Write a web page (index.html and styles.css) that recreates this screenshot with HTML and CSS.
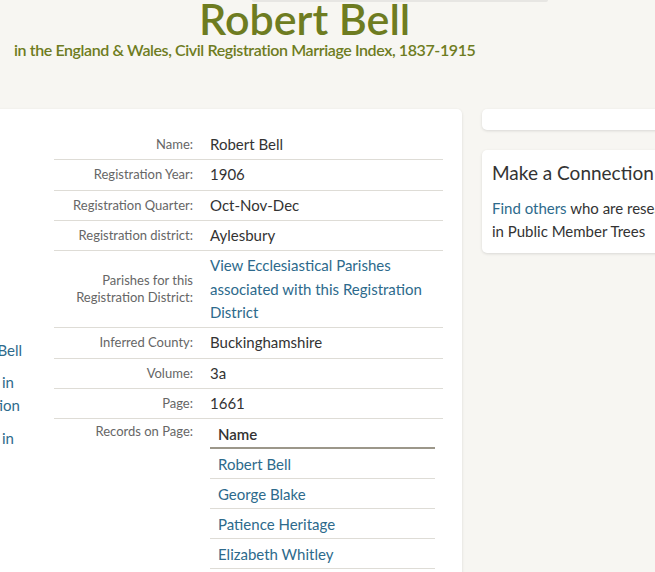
FILE: index.html
```html
<!DOCTYPE html>
<html>
<head>
<meta charset="utf-8">
<title>Robert Bell - England &amp; Wales, Civil Registration Marriage Index</title>
<link rel="stylesheet" href="styles.css">
</head>
<body>
<div class="page">
	<div class="topbar"></div>

	<div class="heading">
		<h1>Robert Bell</h1>
		<h2>in the England &amp; Wales, Civil Registration Marriage Index, 1837-1915</h2>
	</div>

	<div class="columns">
		<div class="card main">
			<div class="side">
				<p class="side-link end1"><a href="#">Search for Robert Bell</a></p>
				<p class="side-link end2"><a href="#">Marriages in</a></p>
				<p class="side-link end3"><a href="#">Civil Registration</a></p>
				<p class="side-link end2 next"><a href="#">Records in</a></p>
			</div>

			<table class="record">
				<tr><th>Name:</th><td>Robert Bell</td></tr>
				<tr><th>Registration Year:</th><td>1906</td></tr>
				<tr><th>Registration Quarter:</th><td>Oct-Nov-Dec</td></tr>
				<tr><th>Registration district:</th><td>Aylesbury</td></tr>
				<tr>
					<th>Parishes for this<br>Registration District:</th>
					<td><a href="#">View Ecclesiastical Parishes associated with this Registration District</a></td>
				</tr>
				<tr><th>Inferred County:</th><td>Buckinghamshire</td></tr>
				<tr><th>Volume:</th><td>3a</td></tr>
				<tr><th>Page:</th><td>1661</td></tr>
				<tr class="top">
					<th>Records on Page:</th>
					<td>
						<table class="names">
							<tr><th>Name</th></tr>
							<tr><td><a href="#">Robert Bell</a></td></tr>
							<tr><td><a href="#">George Blake</a></td></tr>
							<tr><td><a href="#">Patience Heritage</a></td></tr>
							<tr><td><a href="#">Elizabeth Whitley</a></td></tr>
						</table>
					</td>
				</tr>
			</table>
		</div>

		<div class="aside">
			<div class="card small"></div>
			<div class="card connect">
				<h3>Make a Connection</h3>
				<p><a href="#">Find others</a> who are researching this person in Public Member Trees</p>
			</div>
		</div>
	</div>
</div>
</body>
</html>
```

FILE: styles.css
```css
html, body
{
margin: 0;
padding: 0;
overflow: hidden;
}

body
{
background-color: #f7f6f2;
font-family: Lato, "Open Sans", sans-serif;
color: #333333;
}

a
{
color: #2d6a8c;
text-decoration: none;
}

.page
{
width: 655px;
height: 572px;
overflow: hidden;
}

.topbar
{
margin-left: 252px;
width: 296px;
height: 2px;
background-color: #e7e6e3;
border-radius: 0 0 3px 3px;
}

.heading h1
{
margin: -5px 0 0 0;
padding-left: 199px;
font-size: 43px;
line-height: 44px;
font-weight: 600;
color: #6e7c21;
}

.heading h2
{
margin: -3px 0 0 0;
padding-left: 14px;
font-size: 16px;
line-height: 24px;
letter-spacing: -0.4px;
font-weight: 600;
color: #6e7c21;
}

.columns
{
display: flex;
align-items: flex-start;
gap: 20px;
margin-top: 47px;
}

.card
{
background-color: #ffffff;
border-radius: 5px;
box-shadow: 0 1px 3px rgba(0, 0, 0, 0.12);
}

.main
{
display: flex;
width: 472px;
margin-left: -10px;
padding: 21px 19px 40px 10px;
box-sizing: border-box;
flex-shrink: 0;
}

/* links column, clipped by the window edge */
.side
{
width: 54px;
padding-top: 209px;
overflow: hidden;
flex-shrink: 0;
}

.side-link
{
display: flex;
justify-content: flex-end;
margin: 0;
font-size: 15px;
line-height: 23px;
white-space: nowrap;
}

.side-link a
{
flex-shrink: 0;
}

.side-link.end1 { padding-right: 32px; margin-bottom: 9px; }
.side-link.end2 { padding-right: 40px; }
.side-link.end3 { padding-right: 34px; }
.side-link.next { margin-top: 10px; }

table.record
{
width: 389px;
border-collapse: collapse;
font-size: 15px;
}

table.record > tbody > tr > th,
table.record > tbody > tr > td
{
border-bottom: 1px solid #dedcd6;
padding: 3px 0;
line-height: 23.33px;
vertical-align: middle;
}

table.record > tbody > tr:last-child > th,
table.record > tbody > tr:last-child > td
{
border-bottom: none;
}

table.record > tbody > tr > th
{
width: 139px;
padding-right: 7px;
text-align: right;
font-size: 13px;
line-height: 17px;
font-weight: normal;
color: #666666;
}

table.record > tbody > tr > td
{
padding-left: 10px;
}

table.record tr.top > th
{
vertical-align: top;
padding-top: 4px;
}

table.record tr.top > td
{
padding: 0 8px 0 10px;
}

table.names
{
width: 225px;
border-collapse: collapse;
}

table.names th
{
text-align: left;
font-weight: 600;
padding: 4px 8px 1px 8px;
line-height: 23px;
color: #333333;
border-bottom: 2px solid #9c978a;
}

table.names td
{
padding: 4px 8px 2px 8px;
line-height: 23px;
border-bottom: 1px solid #dedcd6;
}

.aside
{
width: 308px;
flex-shrink: 0;
}

.small
{
height: 21px;
margin-bottom: 20px;
}

.connect
{
padding: 10px 10px 10px 10px;
}

.connect h3
{
margin: 0 0 11px 0;
font-size: 19px;
line-height: 26px;
font-weight: normal;
color: #333333;
}

.connect p
{
margin: 0;
font-size: 15px;
line-height: 23px;
color: #333333;
}
```
